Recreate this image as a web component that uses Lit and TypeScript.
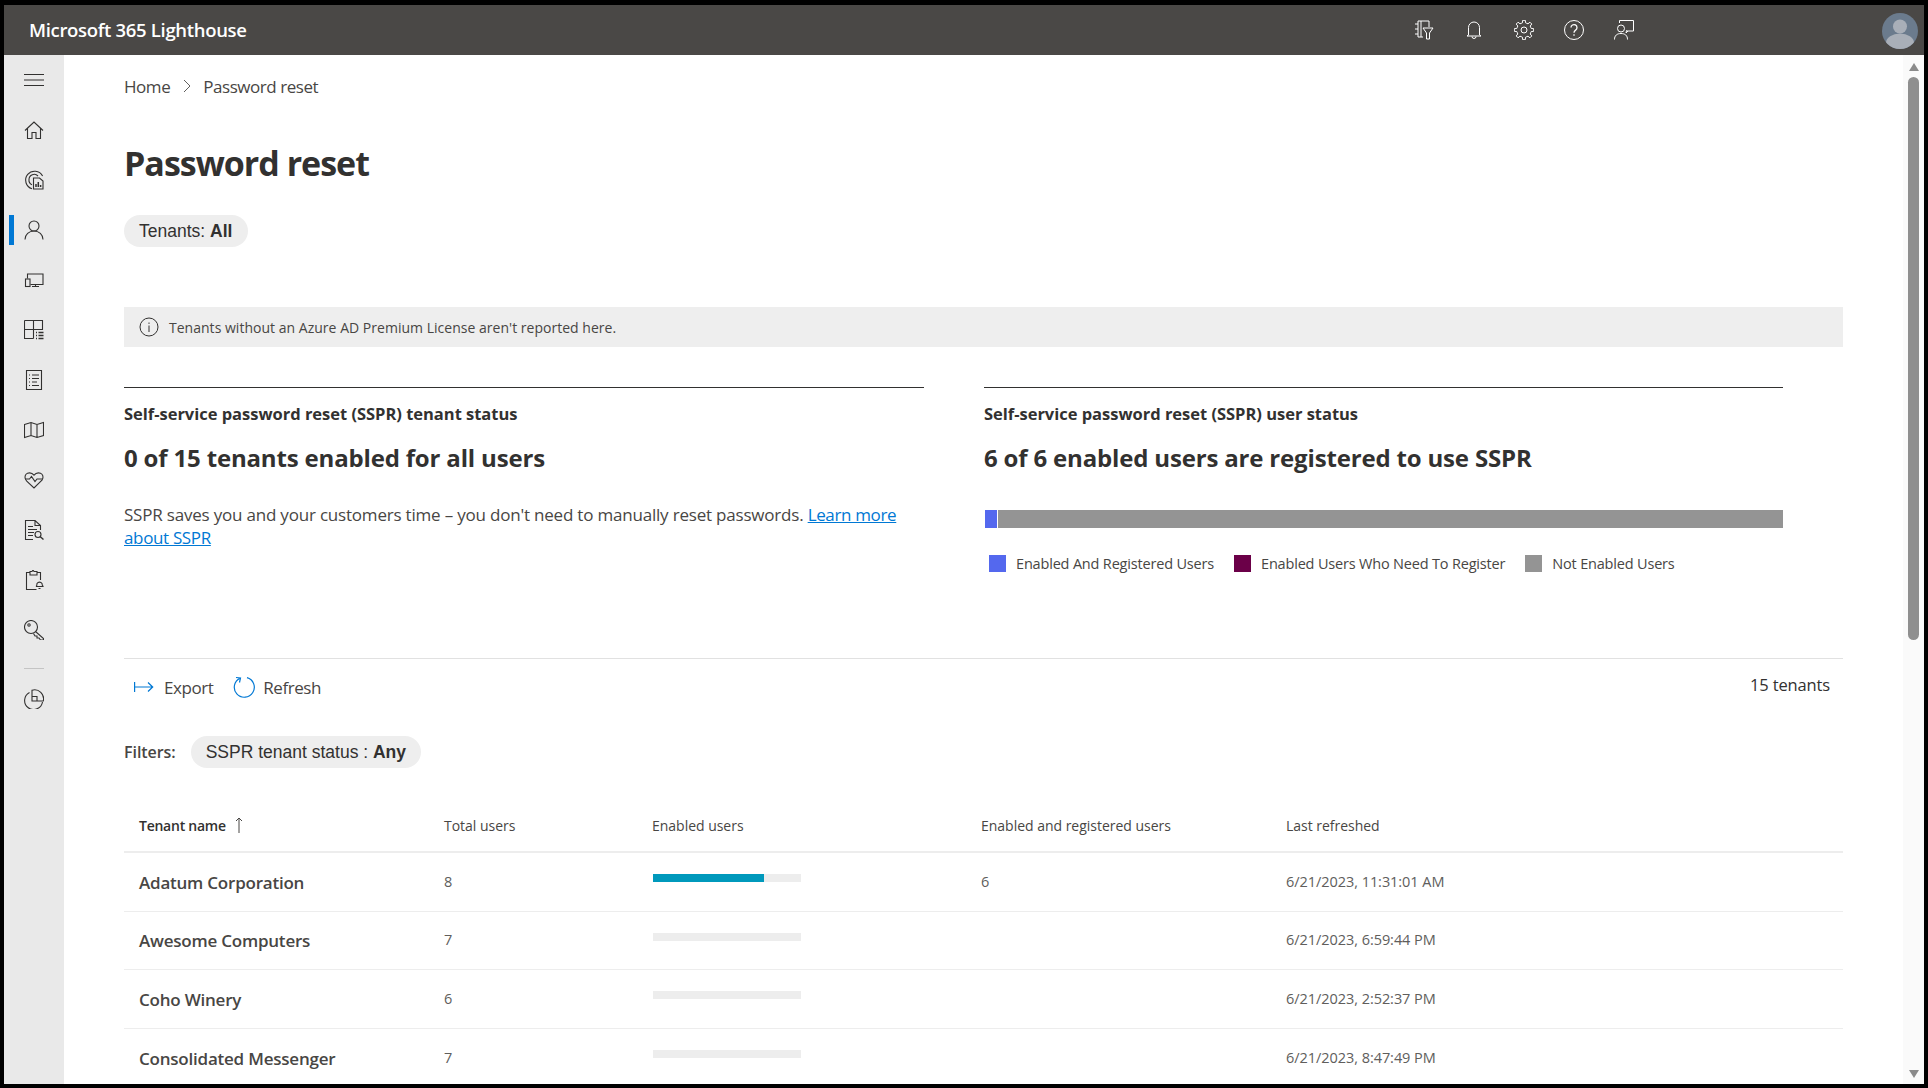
import { LitElement, html, css } from "lit";
import { customElement } from "lit/decorators.js";

const gear = (() => {
  const c = 10, pts: string[] = [], n = 8;
  for (let i = 0; i < n; i++) {
    const a = (i / n) * Math.PI * 2;
    const st = Math.PI * 2 / n;
    const p = (r: number, t: number) => `${(c + r * Math.cos(t)).toFixed(2)} ${(c + r * Math.sin(t)).toFixed(2)}`;
    pts.push(p(7.2, a - st * 0.5), p(7.4, a - st * 0.27), p(9.8, a - st * 0.17), p(9.8, a + st * 0.17), p(7.4, a + st * 0.27));
  }
  return "M" + pts.join(" L") + " Z";
})();

const sideIcons = [
  html`<svg class="ic" viewBox="0 0 20 20" width="20" height="20"><path d="M1 10.500 10 2l9 8.500M3.500 8.300V18.500H8v-6h4v6h4.500V8.300"/></svg>`,
  html`<svg class="ic" viewBox="0 0 20 20" width="20" height="20"><path d="M8 18.800A9 9 0 1 1 18.600 6M8 14.800A5.200 5.200 0 0 1 5 9.500 5.200 5.200 0 0 1 14 6"/><path d="M9.500 8h6l3.500 3v8H9.500z"/><path d="M12 17v-3M14.300 17v-5M16.600 17v-2" stroke-width="1.500"/></svg>`,
  html`<svg class="ic" viewBox="0 0 20 20" width="20" height="20"><circle cx="10" cy="6" r="5"/><path d="M1 19.500C1 14.500 5 11 10 11s9 3.500 9 8.500"/></svg>`,
  html`<svg class="ic" viewBox="0 0 20 20" width="20" height="20"><path d="M3.500 8.500V4h15.500v10.500H6.500M8 16.500h7M11.500 14.500v2"/><rect x="1.500" y="9" width="4.500" height="7.500"/></svg>`,
  html`<svg class="ic" viewBox="0 0 20 20" width="20" height="20"><path d="M.5.500h18v9.500M9.500.500v18M.5.500v18h9M.5 9.500H18"/><path d="M12 12.500h1M12 15.500h1M12 18.500h1M14.500 12.500h5M14.500 15.500h5M14.500 18.500h5" stroke-width="1.300"/></svg>`,
  html`<svg class="ic" viewBox="0 0 20 20" width="20" height="20"><path d="M2.500.500h15v19h-15zM5 5h1M8 5h7M5 8.500h1M8 8.500h7M5 12h1M8 12h5M5 15.500h1M8 15.500h7"/></svg>`,
  html`<svg class="ic" viewBox="0 0 20 20" width="20" height="20"><path d="M.5 4.500 7 2.500l6 2 6.500-2v13l-6.500 2-6-2-6.500 2zM7 2.500v13M13 4.500v13"/></svg>`,
  html`<svg class="ic" viewBox="0 0 20 20" width="20" height="20"><path d="M3 11.500 1.800 9.800C.3 7.500 1 4 3.500 3.200c2.500-.8 4.800-.2 6.500 2 1.700-2.200 4-2.800 6.500-2 2.500.8 3.200 4.300 1.700 6.600L10 18z"/><path d="M1.500 9h4l2-2.500 3.500 5 2-2.500h5"/></svg>`,
  html`<svg class="ic" viewBox="0 0 20 20" width="20" height="20"><path d="M9 19.500H1.500V.5H11l5.500 5v4.500M11 .5v5h5.500M4 6.500h5M4 9.500h9M4 12.500h6M4 15.500h5"/><circle cx="14" cy="14.500" r="3"/><path d="m16 16.500 3.500 3" stroke-width="1.400"/></svg>`,
  html`<svg class="ic" viewBox="0 0 20 20" width="20" height="20"><path d="M6 2.500H2.500v17h10M13 2.500h3.500V10M6 1.500h2l1-1.500 1 1.500h3V5H6z"/><path d="M12 16.500c1-.5 1-1.500 1-3a3 3 0 0 1 5 0c0 1.500 0 2.500 1.500 3zM14.500 18.500h2" stroke-width="1.100"/></svg>`,
  html`<svg class="ic" viewBox="0 0 20 20" width="20" height="20"><circle cx="7" cy="7" r="6.500"/><path d="m11.500 11.500 8 7v1.500h-3L15 18h-2v-2h-2l-1.500-2.500"/><circle cx="5" cy="5" r="1.200"/></svg>`,
];
const lastIcon = html`<svg class="ic" viewBox="0 0 20 20" width="20" height="20"><path d="M5.500 3.500A9 9 0 1 0 18.500 13"/><path d="M8 1.200A9 9 0 0 1 19.300 12H8z"/><path d="M8 7.500h5V12"/></svg>`;

const rows = [
  ["Adatum Corporation", "8", 75, "6", "6/21/2023, 11:31:01 AM"],
  ["Awesome Computers", "7", 0, "", "6/21/2023, 6:59:44 PM"],
  ["Coho Winery", "6", 0, "", "6/21/2023, 2:52:37 PM"],
  ["Consolidated Messenger", "7", 0, "", "6/21/2023, 8:47:49 PM"],
] as const;

@customElement("app-root")
export class AppRoot extends LitElement {
  static styles = css`
    :host { display: block; width: 1928px; height: 1088px; background: #000; box-sizing: border-box; padding: 5px 4px 4px 4px; font-family: "Open Sans", "Noto Sans", sans-serif; color: #323130; overflow: hidden; }
    .frame { width: 1920px; height: 1079px; display: flex; flex-direction: column; background: #fff; overflow: hidden; }
    .top { height: 50px; flex: none; background: #4a4846; display: flex; align-items: center; color: #fff; position: relative; }
    .brand { margin-left: 25px; padding-bottom: 2px; font-size: 18.5px; font-weight: 600; letter-spacing: -0.32px; flex: none; width: 1385px; white-space: nowrap; }
    .top-icons { display: flex; gap: 30px; align-items: center; flex: none; }
    .top-icons svg { fill: none; stroke: #fff; stroke-width: 1; display: block; }
    .avatar { margin-left: 248px; display: block; margin-top: 2px; }
    .body { flex: 1; display: flex; min-height: 0; }
    .side { width: 60px; flex: none; background: #e9e9e9; display: flex; flex-direction: column; align-items: center; padding-top: 2px; position: relative; }
    .side-item { height: 50px; width: 100%; display: flex; align-items: center; justify-content: center; position: relative; flex: none; }
    .side-item.ham { height: 46px; margin-bottom: 2px; }
    .ic { fill: none; stroke: #323130; stroke-width: 1.1; display: block; }
    .active::before { content: ""; position: absolute; left: 5px; top: 10px; width: 5px; height: 30px; background: #0078d4; }
    .divider { width: 20px; height: 1px; background: #c4c4c4; margin: 13px 0 0; flex: none; }
    .side-last { margin-top: 5px; }
    .main { flex: 1; min-width: 0; padding: 19px 60px 0; overflow: hidden; display: flex; flex-direction: column; }
    .crumb { height: 24px; display: flex; align-items: center; font-size: 17px; letter-spacing: -0.45px; color: #484644; flex: none; }
    .crumb svg { margin: 0 12px 0 13px; fill: none; stroke: #605e5c; stroke-width: 1; }
    h1 { margin: 43px 0 0; height: 44px; line-height: 44px; font-size: 34px; font-weight: 700; letter-spacing: -1px; color: #323130; flex: none; }
    .pill { display: inline-flex; align-items: center; background: #eeeeee; border-radius: 16px; height: 32px; padding: 0 15px; font-family: "Liberation Sans", Arial, sans-serif; font-size: 17.5px; color: #323130; white-space: pre; flex: none; }
    .pill b { font-weight: 700; }
    .tp { align-self: flex-start; margin-top: 30px; padding: 0 16px 0 15px; }
    .info { margin-top: 60px; height: 40px; background: #eeeeee; display: flex; align-items: center; padding-left: 15px; font-size: 14px; letter-spacing: 0.02px; color: #484644; flex: none; }
    .info svg { fill: none; stroke: #323130; stroke-width: 1; margin-right: 10px; }
    .cols { margin-top: 40px; display: grid; grid-template-columns: 800px 799px; gap: 60px; height: 271px; flex: none; }
    .col { border-top: 1px solid #323130; padding-top: 16px; }
    .col h3 { margin: 0; height: 20px; line-height: 20px; font-size: 16.5px; font-weight: 700; letter-spacing: -0.02px; color: #323130; }
    .col h2 { margin: 16px 0 0; height: 36px; line-height: 36px; font-size: 24px; font-weight: 700; letter-spacing: -0.17px; color: #323130; }
    .col p { margin: 27px 0 0; font-size: 17px; line-height: 23px; letter-spacing: -0.2px; color: #484644; }
    .col a { color: #0078d4; text-decoration: underline; letter-spacing: -0.35px; }
    .bar { margin: 34px 0 0 1px; height: 18px; display: flex; gap: 1px; }
    .bar .a { width: 12px; background: #5468ee; }
    .bar .b { flex: 1; background: #949494; }
    .legend { display: flex; margin: 26px 0 0 5px; font-size: 14.5px; letter-spacing: -0.18px; color: #484644; align-items: center; white-space: nowrap; }
    .legend i { width: 17px; height: 17px; margin-right: 10px; flex: none; }
    .legend span { margin-right: 20px; }
    .toolbar { border-top: 1px solid #e1e1e1; height: 77px; display: flex; align-items: flex-start; flex: none; font-size: 17px; letter-spacing: -0.45px; color: #484644; }
    .tb { display: flex; align-items: center; height: 56px; }
    .tb svg { fill: none; stroke: #0078d4; stroke-width: 1.2; }
    .tb1 { margin-left: 10px; gap: 10px; }
    .tb2 { margin-left: 20px; gap: 8px; }
    .count { margin-left: auto; margin-right: 13px; margin-top: 14px; font-size: 16.5px; letter-spacing: -0.15px; color: #323130; }
    .filters { display: flex; align-items: center; gap: 15px; flex: none; }
    .filters label { font-size: 16px; font-weight: 600; letter-spacing: -0.05px; color: #484644; }
    .table { margin-top: 31px; flex: none; }
    .row { display: grid; grid-template-columns: 305px 208px 329px 305px 1fr; height: 58.67px; box-sizing: border-box; border-bottom: 1px solid #ededed; align-items: center; }
    .row > * { padding-left: 15px; min-width: 0; }
    .head { height: 54px; border-bottom: 2px solid #ededed; font-size: 14px; letter-spacing: -0.02px; color: #484644; }
    .head .n { font-weight: 600; display: flex; align-items: center; gap: 9px; color: #323130; letter-spacing: -0.25px; }
    .head svg { fill: none; stroke: #484644; stroke-width: 1; }
    .name { font-size: 17px; font-weight: 600; letter-spacing: -0.22px; color: #484644; white-space: nowrap; padding-top: 1px; }
    .num { font-size: 14.5px; letter-spacing: -0.05px; color: #605e5c; padding-bottom: 1px; }
    .pb { width: 148px; height: 8px; background: #ededed; margin: 21px 0 0 16px; padding: 0 !important; align-self: start; }
    .pb div { height: 100%; background: #0099bc; }
    .scroll { width: 21px; flex: none; background: #fafafa; position: relative; display: flex; flex-direction: column; align-items: center; }
    .up { margin-top: 8px; width: 0; height: 0; border-left: 5px solid transparent; border-right: 5px solid transparent; border-bottom: 8px solid #8a8a8a; }
    .thumb { margin-top: 6px; width: 11px; height: 563px; background: #8f8f8f; border-radius: 6px; }
    .down { margin-top: auto; margin-bottom: 6px; width: 0; height: 0; border-left: 5px solid transparent; border-right: 5px solid transparent; border-top: 8px solid #8a8a8a; }
  `;

  render() {
    return html`
      <div class="frame">
        <header class="top">
          <div class="brand">Microsoft 365 Lighthouse</div>
          <div class="top-icons">
            <svg viewBox="0 0 20 20" width="20" height="20"><path d="M1 4h3M1 9h3M1 14h3M4 1v16h5M7 1v16M4 1h11v6M9 8h10l-3.500 5v6h-3v-6z"/></svg>
            <svg viewBox="0 0 20 20" width="20" height="20"><path d="M4.500 15V7.500a5.500 5.500 0 0 1 11 0V15l1.500 1H3zM8 16.500a2 2 0 0 0 4 0"/></svg>
            <svg viewBox="0 0 20 20" width="20" height="20"><path d="${gear}"/><circle cx="10" cy="10" r="3"/></svg>
            <svg viewBox="0 0 20 20" width="20" height="20"><circle cx="10" cy="10" r="9.500"/><path d="M7 7.600a3 3 0 1 1 4.600 2.500c-1 .7-1.600 1.300-1.600 2.700M10 14.300v1.400" stroke-width="1.300"/></svg>
            <svg viewBox="0 0 20 20" width="20" height="20"><path d="M5.500 3V.5h14V11H14l-2 2 .5-2.500h1"/><circle cx="7" cy="8.500" r="3.500"/><path d="M.5 19.500c0-4 2.500-6 6.500-6s6.500 2 6.500 6"/></svg>
          </div>
          <svg class="avatar" viewBox="0 0 36 36" width="36" height="36"><defs><clipPath id="av"><circle cx="18" cy="18" r="18"/></clipPath></defs><g clip-path="url(#av)"><rect width="36" height="36" fill="#6b7b8d"/><circle cx="18" cy="13.500" r="7" fill="#a9afb8"/><ellipse cx="18" cy="30" rx="14" ry="9.500" fill="#a9afb8"/></g></svg>
        </header>
        <div class="body">
          <nav class="side">
            <div class="side-item ham"><svg class="ic" viewBox="0 0 20 20" width="20" height="20"><path d="M0 4.500h20M0 10h20M0 15.500h20"/></svg></div>
            ${sideIcons.map((s, i) => html`<div class="side-item ${i === 2 ? "active" : ""}">${s}</div>`)}
            <div class="divider"></div>
            <div class="side-item side-last">${lastIcon}</div>
          </nav>
          <main class="main">
            <div class="crumb"><span>Home</span><svg viewBox="0 0 8 14" width="8" height="14"><path d="m1 1 6 6-6 6"/></svg><span>Password reset</span></div>
            <h1>Password reset</h1>
            <div class="pill tp">Tenants: <b>All</b></div>
            <div class="info">
              <svg viewBox="0 0 20 20" width="20" height="20"><circle cx="10" cy="10" r="9"/><path d="M10 8.500V15M10 5.500v1.400"/></svg>
              <span>Tenants without an Azure AD Premium License aren't reported here.</span>
            </div>
            <section class="cols">
              <div class="col">
                <h3>Self-service password reset (SSPR) tenant status</h3>
                <h2>0 of 15 tenants enabled for all users</h2>
                <p>SSPR saves you and your customers time – you don't need to manually reset passwords. <a href="#">Learn more about SSPR</a></p>
              </div>
              <div class="col">
                <h3>Self-service password reset (SSPR) user status</h3>
                <h2>6 of 6 enabled users are registered to use SSPR</h2>
                <div class="bar"><div class="a"></div><div class="b"></div></div>
                <div class="legend">
                  <i style="background:#5468ee"></i><span>Enabled And Registered Users</span>
                  <i style="background:#6b0048"></i><span>Enabled Users Who Need To Register</span>
                  <i style="background:#949494"></i><span>Not Enabled Users</span>
                </div>
              </div>
            </section>
            <div class="toolbar">
              <div class="tb tb1"><svg viewBox="0 0 20 12" width="20" height="12"><path d="M.6 1v10M.6 6h18M14 1.500 18.700 6 14 10.500"/></svg><span>Export</span></div>
              <div class="tb tb2"><svg viewBox="0 0 22 22" width="22" height="22"><path d="M7 2.200A10 10 0 1 0 14 1.600M6.500 6.500 7.500 2 3 1.500" /></svg><span>Refresh</span></div>
              <div class="count">15 tenants</div>
            </div>
            <div class="filters"><label>Filters:</label><div class="pill">SSPR tenant status : <b>Any</b></div></div>
            <div class="table">
              <div class="row head">
                <div class="n">Tenant name <svg viewBox="0 0 8 16" width="8" height="16"><path d="M4 1v15M1 4l3-3 3 3"/></svg></div>
                <div>Total users</div><div>Enabled users</div><div>Enabled and registered users</div><div>Last refreshed</div>
              </div>
              ${rows.map((r) => html`<div class="row">
                <div class="name">${r[0]}</div>
                <div class="num">${r[1]}</div>
                <div class="pb"><div style="width:${r[2]}%"></div></div>
                <div class="num">${r[3]}</div>
                <div class="num">${r[4]}</div>
              </div>`)}
            </div>
          </main>
          <div class="scroll"><div class="up"></div><div class="thumb"></div><div class="down"></div></div>
        </div>
      </div>
    `;
  }
}
